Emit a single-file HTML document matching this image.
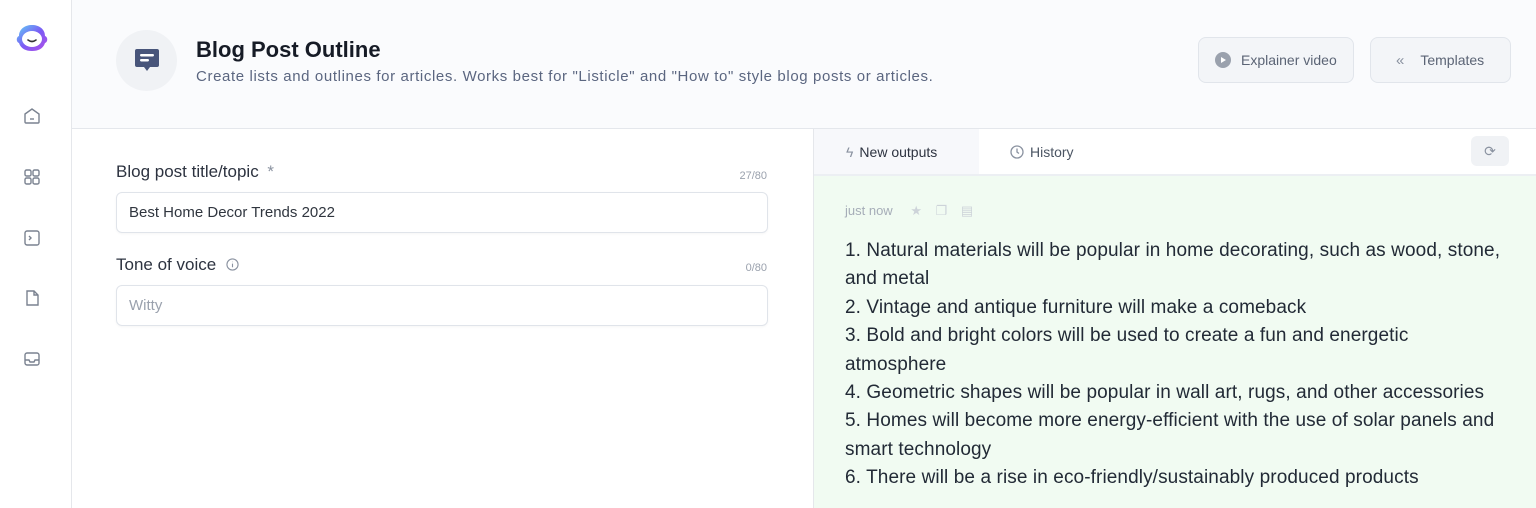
<!DOCTYPE html>
<html><head><meta charset="utf-8"><style>
*{margin:0;padding:0;box-sizing:border-box}
body{width:1536px;height:508px;overflow:hidden;background:#fff;font-family:"Liberation Sans",sans-serif;position:relative}
.side{position:absolute;left:0;top:0;width:72px;height:508px;background:#fff;border-right:1px solid #e5e7eb}
.hdr{position:absolute;left:72px;top:0;right:0;height:129px;background:#fafbfd;border-bottom:1px solid #e4e7ec}
.ic{position:absolute;left:22px}
.btn{position:absolute;top:37px;height:46px;border:1px solid #e1e5eb;border-radius:8px;background:#f3f5f8;color:#5b6475;font-size:14px;display:flex;align-items:center;padding-left:16px}
.lbl{position:absolute;left:116px;font-size:17px;color:#2d3340}
.cnt{position:absolute;right:769px;font-size:11px;color:#9aa1ad}
.inp{position:absolute;left:116px;width:652px;height:41px;border:1px solid #e0e4ea;border-radius:6px;font-size:15px;padding:11px 12px;color:#30363f;box-shadow:0 1px 2px rgba(0,0,0,.04)}
.right{position:absolute;left:813px;top:129px;right:0;bottom:0;border-left:1px solid #e5e7eb}
.tabs{height:47px;border-bottom:2px solid #eceff3;position:relative;background:#fff}
.out{position:absolute;left:0;right:0;top:47px;bottom:0;background:#f1fbf2}
.txt{position:absolute;left:31px;top:61px;font-size:19px;line-height:28.4px;color:#222a36;white-space:nowrap;letter-spacing:.1px}
</style></head><body>
<div class="side">
<svg class="ic" style="left:13px;top:22px" width="40" height="32" viewBox="0 0 40 32"><defs><linearGradient id="g" x1="0" y1="0" x2="1" y2="1"><stop offset="0" stop-color="#5fd3f5"/><stop offset=".5" stop-color="#7b5cf5"/><stop offset="1" stop-color="#b04ee6"/></linearGradient></defs><path d="M6 14c0-7 6-11 13-11s13 4 13 11c3 1 3 6 0 7-2 6-7 8-13 8S8 27 6 21c-3-1-3-6 0-7z" fill="url(#g)"/><ellipse cx="19" cy="17" rx="10" ry="8" fill="#fff"/><path d="M15 18q4 3 8 0" stroke="#333" stroke-width="1.6" fill="none" stroke-linecap="round"/></svg>
<svg class="ic" style="top:106px" width="20" height="20" viewBox="0 0 20 20" fill="none" stroke="#7a8290" stroke-width="1.4"><path d="M3 8l7-5 7 5v8a1 1 0 0 1-1 1H4a1 1 0 0 1-1-1z"/><path d="M8 13h4"/></svg>
<svg class="ic" style="top:167px" width="20" height="20" viewBox="0 0 20 20" fill="none" stroke="#7a8290" stroke-width="1.4"><rect x="3" y="3" width="6" height="6" rx="1.5"/><rect x="11" y="3" width="6" height="6" rx="1.5"/><rect x="3" y="11" width="6" height="6" rx="1.5"/><rect x="11" y="11" width="6" height="6" rx="1.5"/></svg>
<svg class="ic" style="top:228px" width="20" height="20" viewBox="0 0 20 20" fill="none" stroke="#7a8290" stroke-width="1.4"><rect x="3" y="3" width="14" height="14" rx="2"/><path d="M7 8l2 2-2 2"/></svg>
<svg class="ic" style="top:288px" width="20" height="20" viewBox="0 0 20 20" fill="none" stroke="#7a8290" stroke-width="1.4"><path d="M5 3h7l4 4v10H5z"/><path d="M12 3v4h4"/></svg>
<svg class="ic" style="top:349px" width="20" height="20" viewBox="0 0 20 20" fill="none" stroke="#7a8290" stroke-width="1.4"><rect x="3" y="4" width="14" height="12" rx="2"/><path d="M3 11h4l1 2h4l1-2h4"/></svg>
</div>
<div class="hdr">
<div style="position:absolute;left:44px;top:30px;width:61px;height:61px;border-radius:50%;background:#f0f2f5"></div>
<svg style="position:absolute;left:59px;top:45px" width="32" height="32" viewBox="0 0 32 32"><path d="M4 6a2 2 0 0 1 2-2h20a2 2 0 0 1 2 2v14a2 2 0 0 1-2 2h-7l-3 4-3-4H6a2 2 0 0 1-2-2z" fill="#48557a"/><rect x="9" y="9" width="14" height="2.5" rx="1.2" fill="#fff"/><rect x="9" y="14" width="9" height="2.5" rx="1.2" fill="#fff"/></svg>
<div style="position:absolute;left:124px;top:37px;font-size:22px;font-weight:bold;color:#161b26">Blog Post Outline</div>
<div style="position:absolute;left:124px;top:68px;font-size:15px;color:#5b6680;letter-spacing:.62px">Create lists and outlines for articles. Works best for "Listicle" and "How to" style blog posts or articles.</div>
</div>
<div class="btn" style="left:1198px;width:156px"><svg width="16" height="16" viewBox="0 0 16 16" style="margin-right:10px"><circle cx="8" cy="8" r="8" fill="#9aa1ad"/><path d="M6 5l5 3-5 3z" fill="#fff"/></svg>Explainer video</div>
<div class="btn" style="left:1370px;width:141px;padding-left:25px"><span style="margin-right:16px;font-size:15px;color:#8a92a0">«</span>Templates</div>
<div class="lbl" style="top:162px">Blog post title/topic <span style="color:#8a92a0;margin-left:4px">*</span></div>
<div class="cnt" style="top:170px">27/80</div>
<div class="inp" style="top:192px">Best Home Decor Trends 2022</div>
<div class="lbl" style="top:255px">Tone of voice <svg width="13" height="13" viewBox="0 0 14 14" style="margin-left:5px;vertical-align:-1px" fill="none" stroke="#8a92a0" stroke-width="1.2"><circle cx="7" cy="7" r="6"/><path d="M7 6v4M7 4v.5"/></svg></div>
<div class="cnt" style="top:262px">0/80</div>
<div class="inp" style="top:285px;color:#9aa1ad">Witty</div>
<div class="right">
<div class="tabs">
<div style="position:absolute;left:0;top:0;width:165px;height:45px;background:#f7f8fb"></div>
<div style="position:absolute;left:32px;top:15px;font-size:14px;color:#2d3340"><span style="color:#8a92a0;margin-right:6px">ϟ</span>New outputs</div>
<div style="position:absolute;left:196px;top:15px;font-size:14px;color:#4b5563"><svg width="14" height="14" viewBox="0 0 14 14" fill="none" stroke="#8a92a0" stroke-width="1.3" style="vertical-align:-2px;margin-right:6px"><circle cx="7" cy="7" r="6"/><path d="M7 3.5V7l2 1.5"/></svg>History</div>
<div style="position:absolute;left:657px;top:7px;width:38px;height:30px;border-radius:6px;background:#f0f2f5;text-align:center;line-height:30px;color:#8a92a0;font-size:14px">⟳</div>
</div>
<div class="out">
<div style="position:absolute;left:31px;top:27px;font-size:13px;color:#a6adb8">just now <span style="margin-left:14px;color:#cdd3d9">★</span> <span style="margin-left:10px;color:#cdd3d9">❐</span> <span style="margin-left:10px;color:#cdd3d9">▤</span></div>
<div class="txt">1. Natural materials will be popular in home decorating, such as wood, stone,<br>and metal<br>2. Vintage and antique furniture will make a comeback<br>3. Bold and bright colors will be used to create a fun and energetic<br>atmosphere<br>4. Geometric shapes will be popular in wall art, rugs, and other accessories<br>5. Homes will become more energy-efficient with the use of solar panels and<br>smart technology<br>6. There will be a rise in eco-friendly/sustainably produced products</div>
</div>
</div>
</body></html>
